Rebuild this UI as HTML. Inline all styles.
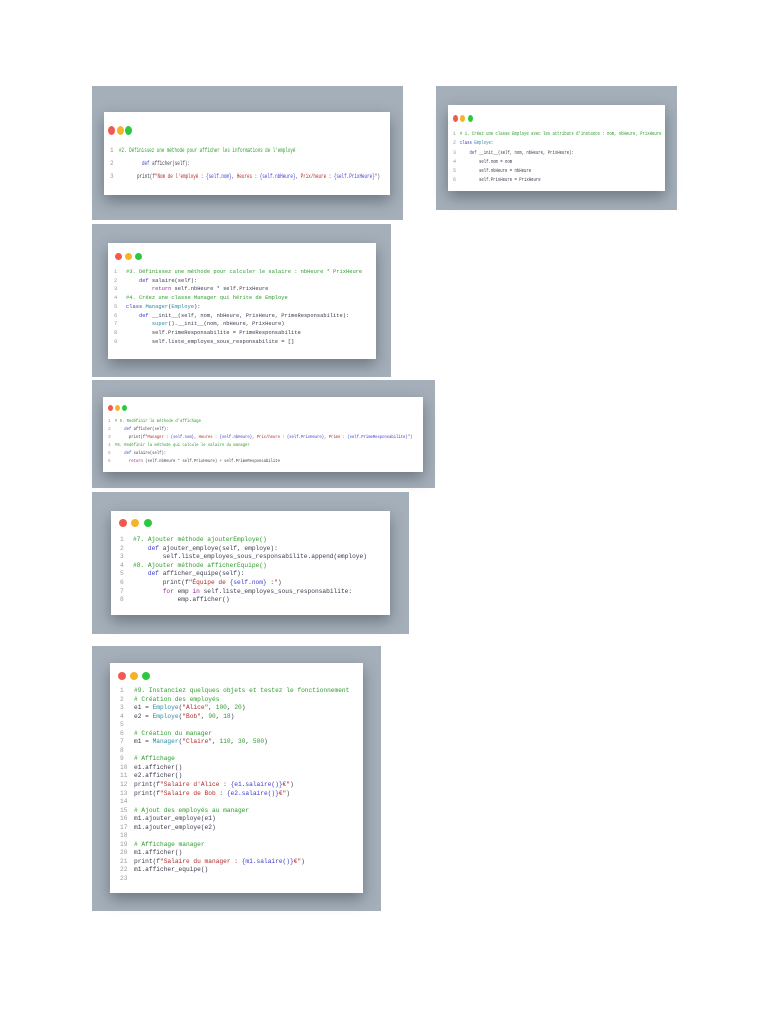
<!DOCTYPE html>
<html><head><meta charset="utf-8">
<style>
html,body{margin:0;padding:0;background:#fff;width:768px;height:1024px;overflow:hidden;position:relative}
.g{position:absolute;background:#a5afba}
.c{position:absolute;background:#fff;box-shadow:0 6px 14px rgba(40,50,60,.45)}
.d{position:absolute;border-radius:50%}
.r{background:#f05a50}.y{background:#f5b428}.gr{background:#2ec840}
.l{position:absolute;white-space:pre;font-family:"Liberation Mono",monospace;color:#3a3a50;transform-origin:left center}
.n{position:absolute;font-family:"Liberation Mono",monospace;color:#999}
.cm{color:#2f9a2f}.k{color:#3a3ad0}.t{color:#2b8aa8}.s{color:#b02a2a}.p{color:#a020a0}.nu{color:#2f9a2f}
</style></head><body>

<!-- Block 1 -->
<div class="g" style="left:92px;top:86px;width:311px;height:134px"></div>
<div class="c" style="left:104px;top:112px;width:286px;height:83px"></div>
<div class="d r" style="left:108px;top:126px;width:7px;height:9px"></div>
<div class="d y" style="left:117px;top:126px;width:7px;height:9px"></div>
<div class="d gr" style="left:125px;top:126px;width:7px;height:9px"></div>
<div class="n" style="left:110px;top:147px;font-size:6px">1</div>
<div class="n" style="left:110px;top:160px;font-size:6px">2</div>
<div class="n" style="left:110px;top:173px;font-size:6px">3</div>
<div class="l" style="left:119px;top:147px;font-size:6px;transform:scaleX(.7)"><span class="cm">#2. Définissez une méthode pour afficher les informations de l'employé</span></div>
<div class="l" style="left:142px;top:160px;font-size:6px;transform:scaleX(.7)"><span class="k">def</span> afficher(self):</div>
<div class="l" style="left:137px;top:173px;font-size:6px;transform:scaleX(.71)">print(f<span class="s">"Nom de l'employé : </span><span class="k">{self.nom}</span><span class="s">, Heures : </span><span class="k">{self.nbHeure}</span><span class="s">, Prix/heure : </span><span class="k">{self.PrixHeure}</span><span class="s">"</span>)</div>

<!-- Block 2 -->
<div class="g" style="left:436px;top:86px;width:241px;height:124px"></div>
<div class="c" style="left:448px;top:105px;width:217px;height:86px"></div>
<div class="d r" style="left:453px;top:115px;width:5px;height:7px"></div>
<div class="d y" style="left:460px;top:115px;width:5px;height:7px"></div>
<div class="d gr" style="left:468px;top:115px;width:5px;height:7px"></div>
<div class="n" style="left:453px;top:130px;font-size:5px;line-height:9.3px">1<br>2<br>3<br>4<br>5<br>6</div>
<div class="l" style="left:460px;top:130px;font-size:5px;line-height:9.3px;transform:scaleX(.79);transform-origin:left top"><span class="cm"># 1. Créez une classe Employe avec les attributs d'instance : nom, nbHeure, PrixHeure</span>
<span class="k">class</span> <span class="t">Employe</span>:
    <span class="k">def</span> __init__(self, nom, nbHeure, PrixHeure):
        self.nom = nom
        self.nbHeure = nbHeure
        self.PrixHeure = PrixHeure</div>

<!-- Block 3 -->
<div class="g" style="left:92px;top:224px;width:299px;height:153px"></div>
<div class="c" style="left:108px;top:243px;width:268px;height:116px"></div>
<div class="d r" style="left:115px;top:253px;width:7px;height:7px"></div>
<div class="d y" style="left:125px;top:253px;width:7px;height:7px"></div>
<div class="d gr" style="left:135px;top:253px;width:7px;height:7px"></div>
<div class="n" style="left:114px;top:268px;font-size:5.4px;line-height:8.7px">1<br>2<br>3<br>4<br>5<br>6<br>7<br>8<br>9</div>
<div class="l" style="left:126px;top:268px;font-size:5.4px;line-height:8.7px"><span class="cm">#3. Définissez une méthode pour calculer le salaire : nbHeure * PrixHeure</span>
    <span class="k">def</span> salaire(self):
        <span class="p">return</span> self.nbHeure * self.PrixHeure
<span class="cm">#4. Créez une classe Manager qui hérite de Employe</span>
<span class="k">class</span> <span class="t">Manager</span>(<span class="t">Employe</span>):
    <span class="k">def</span> __init__(self, nom, nbHeure, PrixHeure, PrimeResponsabilite):
        <span class="t">super</span>().__init__(nom, nbHeure, PrixHeure)
        self.PrimeResponsabilite = PrimeResponsabilite
        self.liste_employes_sous_responsabilite = []</div>

<!-- Block 4 -->
<div class="g" style="left:92px;top:380px;width:343px;height:108px"></div>
<div class="c" style="left:103px;top:397px;width:320px;height:75px"></div>
<div class="d r" style="left:108px;top:405px;width:5px;height:6px"></div>
<div class="d y" style="left:115px;top:405px;width:5px;height:6px"></div>
<div class="d gr" style="left:122px;top:405px;width:5px;height:6px"></div>
<div class="n" style="left:108px;top:418px;font-size:4.5px;line-height:8px">1<br>2<br>3<br>4<br>5<br>6</div>
<div class="l" style="left:115px;top:418px;font-size:4.5px;line-height:8px;transform:scaleX(.86);transform-origin:left top"><span class="cm"># 5. Redéfinir la méthode d'affichage</span>
    <span class="k">def</span> afficher(self):
      print(f<span class="s">"Manager : </span><span class="k">{self.nom}</span><span class="s">, Heures : </span><span class="k">{self.nbHeure}</span><span class="s">, Prix/heure : </span><span class="k">{self.PrixHeure}</span><span class="s">, Prime : </span><span class="k">{self.PrimeResponsabilite}</span><span class="s">"</span>)
<span class="cm">#6. Redéfinir la méthode qui calcule le salaire du manager</span>
    <span class="k">def</span> salaire(self):
      <span class="p">return</span> (self.nbHeure * self.PrixHeure) + self.PrimeResponsabilite</div>

<!-- Block 5 -->
<div class="g" style="left:92px;top:492px;width:317px;height:142px"></div>
<div class="c" style="left:111px;top:511px;width:279px;height:104px"></div>
<div class="d r" style="left:119px;top:519px;width:8px;height:8px"></div>
<div class="d y" style="left:131px;top:519px;width:8px;height:8px"></div>
<div class="d gr" style="left:144px;top:519px;width:8px;height:8px"></div>
<div class="n" style="left:120px;top:536px;font-size:6.2px;line-height:8.6px">1<br>2<br>3<br>4<br>5<br>6<br>7<br>8</div>
<div class="l" style="left:133px;top:536px;font-size:6.2px;line-height:8.6px"><span class="cm">#7. Ajouter méthode ajouterEmploye()</span>
    <span class="k">def</span> ajouter_employe(self, employe):
        self.liste_employes_sous_responsabilite.append(employe)
<span class="cm">#8. Ajouter méthode afficherEquipe()</span>
    <span class="k">def</span> afficher_equipe(self):
        print(f<span class="s">"Équipe de </span><span class="k">{self.nom}</span><span class="s"> :"</span>)
        <span class="p">for</span> emp <span class="p">in</span> self.liste_employes_sous_responsabilite:
            emp.afficher()</div>

<!-- Block 6 -->
<div class="g" style="left:92px;top:646px;width:289px;height:265px"></div>
<div class="c" style="left:110px;top:663px;width:253px;height:230px"></div>
<div class="d r" style="left:118px;top:672px;width:8px;height:8px"></div>
<div class="d y" style="left:130px;top:672px;width:8px;height:8px"></div>
<div class="d gr" style="left:142px;top:672px;width:8px;height:8px"></div>
<div class="n" style="left:120px;top:687px;font-size:6.2px;line-height:8.55px">1<br>2<br>3<br>4<br>5<br>6<br>7<br>8<br>9<br>10<br>11<br>12<br>13<br>14<br>15<br>16<br>17<br>18<br>19<br>20<br>21<br>22<br>23</div>
<div class="l" style="left:134px;top:687px;font-size:6.2px;line-height:8.55px"><span class="cm">#9. Instanciez quelques objets et testez le fonctionnement</span>
<span class="cm"># Création des employés</span>
e1 = <span class="t">Employe</span>(<span class="s">"Alice"</span>, <span class="nu">100</span>, <span class="nu">20</span>)
e2 = <span class="t">Employe</span>(<span class="s">"Bob"</span>, <span class="nu">90</span>, <span class="nu">18</span>)

<span class="cm"># Création du manager</span>
m1 = <span class="t">Manager</span>(<span class="s">"Claire"</span>, <span class="nu">110</span>, <span class="nu">30</span>, <span class="nu">500</span>)

<span class="cm"># Affichage</span>
e1.afficher()
e2.afficher()
print(f<span class="s">"Salaire d'Alice : </span><span class="k">{e1.salaire()}</span><span class="s">€"</span>)
print(f<span class="s">"Salaire de Bob : </span><span class="k">{e2.salaire()}</span><span class="s">€"</span>)

<span class="cm"># Ajout des employés au manager</span>
m1.ajouter_employe(e1)
m1.ajouter_employe(e2)

<span class="cm"># Affichage manager</span>
m1.afficher()
print(f<span class="s">"Salaire du manager : </span><span class="k">{m1.salaire()}</span><span class="s">€"</span>)
m1.afficher_equipe()
</div>

</body></html>
